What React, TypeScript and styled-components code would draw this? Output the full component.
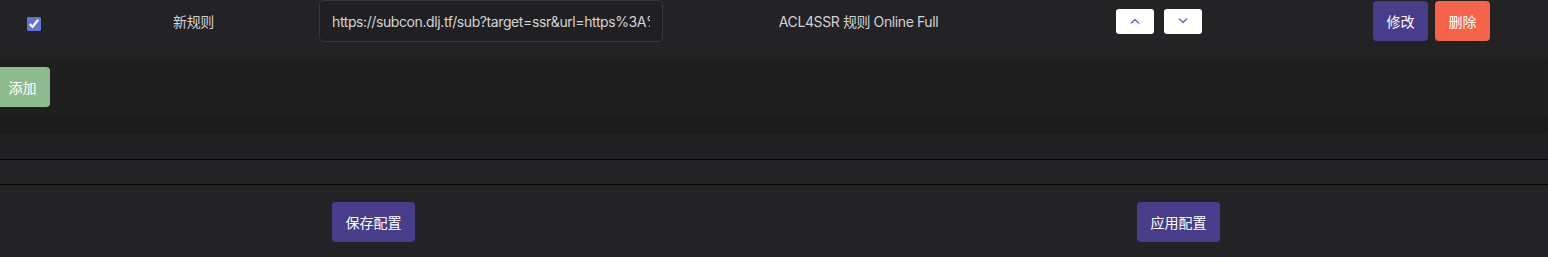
import styled, { createGlobalStyle } from "styled-components"

const GlobalStyle = createGlobalStyle`
    html, body {
        margin: 0;
        padding: 0;
        background: #232325;
    }
    body {
        font-family: Inter, "Noto Sans CJK SC", sans-serif;
        font-size: 14px;
        letter-spacing: -0.4px;
        color: #d4d4d6;
    }
    * {
        box-sizing: border-box;
    }
`;

const Page = styled.div`
    width: 1548px;
    height: 257px;
    overflow: hidden;
    display: flex;
    flex-direction: column;
`;

const RuleRow = styled.div`
    display: grid;
    grid-template-columns: 68px 251px 358px 363px 238px 1fr;
    align-items: center;
    height: 59px;
    padding: 0 0 17px;
    background: #232325;
`;

const Cell = styled.div<{ $align?: string; $gap?: number; $pad?: number }>`
    display: flex;
    align-items: center;
    justify-content: ${(p) => p.$align || "center"};
    gap: ${(p) => p.$gap || 0}px;
    padding-left: ${(p) => p.$pad || 0}px;
    height: 42px;
`;

const Check = styled.input`
    width: 14px;
    height: 14px;
    margin: 5px 0 0 -1px;
    accent-color: #6370dc;
`;

const Label = styled.span`
    color: #d2d2d4;
    font-size: 14px;
`;

const UrlInput = styled.input`
    width: 344px;
    height: 42px;
    padding: 0 12px;
    background: #202022;
    border: 1px solid #38383b;
    border-radius: 5px;
    color: #d4d4d6;
    font-family: Inter, "Noto Sans CJK SC", sans-serif;
    font-size: 14px;
    letter-spacing: -0.4px;
    outline: none;
`;

const MoveButton = styled.button`
    width: 38px;
    height: 25px;
    padding: 0;
    display: flex;
    align-items: center;
    justify-content: center;
    background: #ffffff;
    border: none;
    border-radius: 3px;
`;

const ActionButton = styled.button<{ $bg: string }>`
    height: 40px;
    padding: 0 13.5px;
    background: ${(p) => p.$bg};
    border: none;
    border-radius: 4px;
    color: #ffffff;
    font-family: Inter, "Noto Sans CJK SC", sans-serif;
    font-size: 14px;
    white-space: nowrap;
`;

const AddRow = styled.div`
    height: 55px;
    display: flex;
    align-items: center;
    background: #1f1f20;
    padding-top: 1px;
`;

const AddButton = styled(ActionButton)`
    margin-left: -5px;
`;

const Band = styled.div<{ $h: number; $bg: string; $line?: boolean }>`
    height: ${(p) => p.$h}px;
    background: ${(p) => p.$bg};
    border-bottom: ${(p) => (p.$line ? "1px solid #050505" : "none")};
`;

const Footer = styled.div`
    flex: 1;
    display: grid;
    grid-template-columns: 747px 1fr;
    padding-top: 17px;
    background: #232325;
`;

const FooterCell = styled.div<{ $pad?: number }>`
    display: flex;
    justify-content: center;
    align-items: flex-start;
    padding-left: ${(p) => p.$pad || 0}px;
`;

const Chevron = ({ up }: { up?: boolean }) => (
    <svg width="10" height="6" viewBox="0 0 10 6">
        <polyline
            points={up ? "1.5,5 5,1.5 8.5,5" : "1.5,1 5,4.5 8.5,1"}
            fill="none"
            stroke="#6a6fd4"
            strokeWidth="1.6"
            strokeLinecap="round"
            strokeLinejoin="round"
        />
    </svg>
);

const App = () => {
    return (
        <Page>
            <GlobalStyle />
            <RuleRow>
                <Cell>
                    <Check type="checkbox" defaultChecked />
                </Cell>
                <Cell>
                    <Label>新规则</Label>
                </Cell>
                <Cell $align="flex-start">
                    <UrlInput readOnly value="https://subcon.dlj.tf/sub?target=ssr&url=https%3A%2F%2F" />
                </Cell>
                <Cell>
                    <Label>ACL4SSR 规则 Online Full</Label>
                </Cell>
                <Cell $gap={10}>
                    <MoveButton><Chevron up /></MoveButton>
                    <MoveButton><Chevron /></MoveButton>
                </Cell>
                <Cell $gap={7} $align="flex-start" $pad={95}>
                    <ActionButton $bg="#483d8b">修改</ActionButton>
                    <ActionButton $bg="#f5644a">删除</ActionButton>
                </Cell>
            </RuleRow>
            <AddRow>
                <AddButton $bg="#8fbc8f">添加</AddButton>
            </AddRow>
            <Band $h={20} $bg="#1c1c1d" />
            <Band $h={26} $bg="#202022" $line />
            <Band $h={25} $bg="#242426" $line />
            <Footer>
                <FooterCell>
                    <ActionButton $bg="#483d8b">保存配置</ActionButton>
                </FooterCell>
                <FooterCell $pad={62}>
                    <ActionButton $bg="#483d8b">应用配置</ActionButton>
                </FooterCell>
            </Footer>
        </Page>
    )
}

export default App;
